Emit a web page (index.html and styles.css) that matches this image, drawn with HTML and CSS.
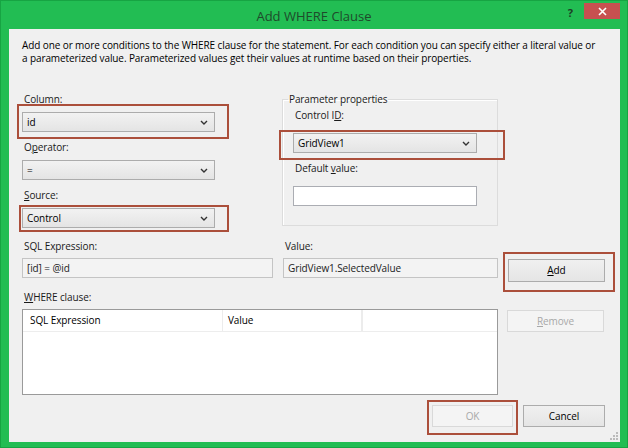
FILE: index.html
```html
<!DOCTYPE html>
<html lang="en">

<head>
<meta charset="UTF-8">
<title>Add WHERE Clause</title>
<link rel="stylesheet" href="styles.css">
</head>

<body>

<div class="window">
    <div class="titlebar">
        <span></span>
        <span class="title">Add WHERE Clause</span>
        <div class="caption-buttons">
            <span class="help">?</span>
            <span class="close">
                <svg width="9" height="9" viewBox="0 0 9 9"><path d="M1 1L8 8M8 1L1 8" stroke="#fff" stroke-width="1.6"/></svg>
            </span>
        </div>
    </div>

    <div class="client">
        <p class="desc">Add one or more conditions to the WHERE clause for the statement. For each condition you can specify either a literal value or a parameterized value. Parameterized values get their values at runtime based on their properties.</p>

        <div class="top">
            <div class="left-col">
                <div class="label">Column:</div>
                <div class="mark mark-column">
                    <div class="combo">id<svg class="chev" width="8" height="5" viewBox="0 0 8 5"><path d="M1 1L4 4L7 1" fill="none" stroke="#333" stroke-width="1.4"/></svg></div>
                </div>
                <div class="label">O<u>p</u>erator:</div>
                <div class="combo">=<svg class="chev" width="8" height="5" viewBox="0 0 8 5"><path d="M1 1L4 4L7 1" fill="none" stroke="#333" stroke-width="1.4"/></svg></div>
                <div class="label"><u>S</u>ource:</div>
                <div class="mark mark-source">
                    <div class="combo last">Control<svg class="chev" width="8" height="5" viewBox="0 0 8 5"><path d="M1 1L4 4L7 1" fill="none" stroke="#333" stroke-width="1.4"/></svg></div>
                </div>
            </div>

            <fieldset class="params">
                <legend>Parameter properties</legend>
                <div class="params-body">
                    <div class="label">Control I<u>D</u>:</div>
                    <div class="mark mark-control">
                        <div class="combo">GridView1<svg class="chev" width="8" height="5" viewBox="0 0 8 5"><path d="M1 1L4 4L7 1" fill="none" stroke="#333" stroke-width="1.4"/></svg></div>
                    </div>
                    <div class="label">Default <u>v</u>alue:</div>
                    <div class="textbox"></div>
                </div>
            </fieldset>
        </div>

        <div class="expr">
            <div class="label">SQL Expression:</div>
            <div class="label">Value:</div>
            <span></span>
            <div class="textbox readonly">[id] = @id</div>
            <div class="textbox readonly">GridView1.SelectedValue</div>
            <div class="mark mark-add">
                <div class="button add"><u>A</u>dd</div>
            </div>
        </div>

        <div class="label"><u>W</u>HERE clause:</div>
        <div class="where">
            <div class="listview">
                <div class="lv-header">
                    <span class="col-expr">SQL Expression</span>
                    <span class="col-value">Value</span>
                    <span class="col-rest"></span>
                </div>
            </div>
            <div class="button disabled remove"><u>R</u>emove</div>
        </div>

        <div class="footer">
            <div class="mark mark-ok">
                <div class="button disabled">OK</div>
            </div>
            <div class="button">Cancel</div>
        </div>

        <svg class="grip" width="8" height="8" viewBox="0 0 8 8">
            <rect x="6" y="0" width="2" height="2" fill="#bbb"/>
            <rect x="3" y="3" width="2" height="2" fill="#bbb"/>
            <rect x="6" y="3" width="2" height="2" fill="#bbb"/>
            <rect x="0" y="6" width="2" height="2" fill="#bbb"/>
            <rect x="3" y="6" width="2" height="2" fill="#bbb"/>
            <rect x="6" y="6" width="2" height="2" fill="#bbb"/>
        </svg>
    </div>
</div>

</body>

</html>
```

FILE: styles.css
```css
body {
    margin: 0;
    font-family: "Open Sans", "Noto Sans", sans-serif;
    font-size: 10px;
    letter-spacing: -0.1px;
    color: #000;
}

.window {
    width: 628px;
    height: 448px;
    box-sizing: border-box;
    background-color: #22bd53;
    border: 1px solid #17a443;
    display: flex;
    flex-direction: column;
}

.titlebar {
    height: 28px;
    display: grid;
    grid-template-columns: 1fr auto 1fr;
    align-items: start;
}

.title {
    font-size: 13px;
    letter-spacing: 0;
    color: #1f4a2b;
    line-height: 30px;
}

.caption-buttons {
    display: flex;
    justify-content: flex-end;
    align-items: flex-start;
    padding-top: 2px;
    padding-right: 7px;
}

.help {
    font-weight: bold;
    font-size: 11px;
    color: #1d3d26;
    margin-right: 11px;
    line-height: 19px;
}

.close {
    width: 36px;
    height: 16px;
    background-color: #c75050;
    display: flex;
    align-items: center;
    justify-content: center;
}

.client {
    flex: 1;
    margin: 0 7px 8px 8px;
    background-color: #f0f0f0;
    padding: 10px 15px 15px 13px;
    position: relative;
}

.desc {
    margin: 0 4px 27px 0;
    line-height: 13px;
}

.label {
    line-height: 14px;
    margin-bottom: 6px;
    padding-left: 2px;
    color: #1a1a1a;
}

.top {
    display: flex;
    align-items: flex-start;
}

.left-col {
    width: 193px;
}

.left-col .combo {
    margin-bottom: 8px;
}

.left-col .combo.last {
    margin-bottom: 0;
}

.combo {
    height: 20px;
    box-sizing: border-box;
    border: 1px solid #acacac;
    background: linear-gradient(#f2f2f2, #e4e4e4);
    padding-left: 4px;
    line-height: 18px;
    display: flex;
    justify-content: space-between;
    align-items: center;
}

.chev {
    margin-right: 6px;
}

.mark {
    position: relative;
}

.mark::after {
    content: "";
    position: absolute;
    border: 2px solid #ab4f3b;
}

.mark-column::after {
    top: -8px;
    bottom: -7px;
    left: -5px;
    right: -14px;
}

.mark-source::after {
    top: -3px;
    bottom: -4px;
    left: -3px;
    right: -14px;
}

.mark-control::after {
    top: -3px;
    bottom: -7px;
    left: -14px;
    right: -28px;
}

.mark-add::after {
    top: -6px;
    bottom: -10px;
    left: -5px;
    right: -10px;
}

.mark-ok::after {
    top: -5px;
    bottom: -8px;
    left: -5px;
    right: -5px;
}

.params {
    margin: 0 0 0 67px;
    padding: 0;
    width: 216px;
    height: 134px;
    box-sizing: border-box;
    border: 1px solid #dcdcdc;
    box-shadow: inset 1px 1px 0 #fff;
}

.params legend {
    padding: 0 1px;
    margin-left: 5px;
    line-height: 14px;
    color: #1a1a1a;
}

.params-body {
    padding: 2px 0 0 10px;
    width: 184px;
}

.params-body .label {
    margin-bottom: 11px;
}

.params-body .combo {
    margin-bottom: 8px;
}

.textbox {
    height: 20px;
    box-sizing: border-box;
    border: 1px solid #abadb3;
    background-color: #fff;
    padding-left: 4px;
    line-height: 18px;
    color: #222;
}

.textbox.readonly {
    background-color: #f3f3f3;
    border-color: #c4c4c4;
}

.expr {
    display: grid;
    grid-template-columns: 251px 215px 97px;
    column-gap: 10px;
    margin-top: 11px;
    margin-bottom: 8px;
}

.expr .label {
    margin-bottom: 5px;
}

.button {
    height: 22px;
    box-sizing: border-box;
    border: 1px solid #acacac;
    background: linear-gradient(#f0f0f0, #e5e5e5);
    text-align: center;
    line-height: 20px;
}

.button.add {
    height: 23px;
    margin-top: 1px;
    line-height: 21px;
}

.button.disabled {
    border-color: #d9d9d9;
    background: #f4f4f4;
    color: #a8a8a8;
}

.where {
    display: flex;
    gap: 9px;
    margin-top: -1px;
}

.listview {
    width: 476px;
    height: 86px;
    box-sizing: border-box;
    border: 1px solid #9a9a9a;
    background-color: #fff;
}

.lv-header {
    display: flex;
    height: 21px;
    border-bottom: 1px solid #ededed;
    line-height: 21px;
}

.lv-header span {
    border-right: 1px solid #ececec;
}

.col-expr {
    width: 192px;
    padding-left: 7px;
}

.col-value {
    width: 133px;
    padding-left: 5px;
}

.remove {
    width: 97px;
    margin-top: 1px;
}

.footer {
    display: flex;
    justify-content: flex-end;
    gap: 10px;
    margin-top: 10px;
}

.footer .button {
    width: 82px;
}

.footer .mark .button {
    width: 81px;
}

.grip {
    position: absolute;
    right: 2px;
    bottom: 2px;
}
```
